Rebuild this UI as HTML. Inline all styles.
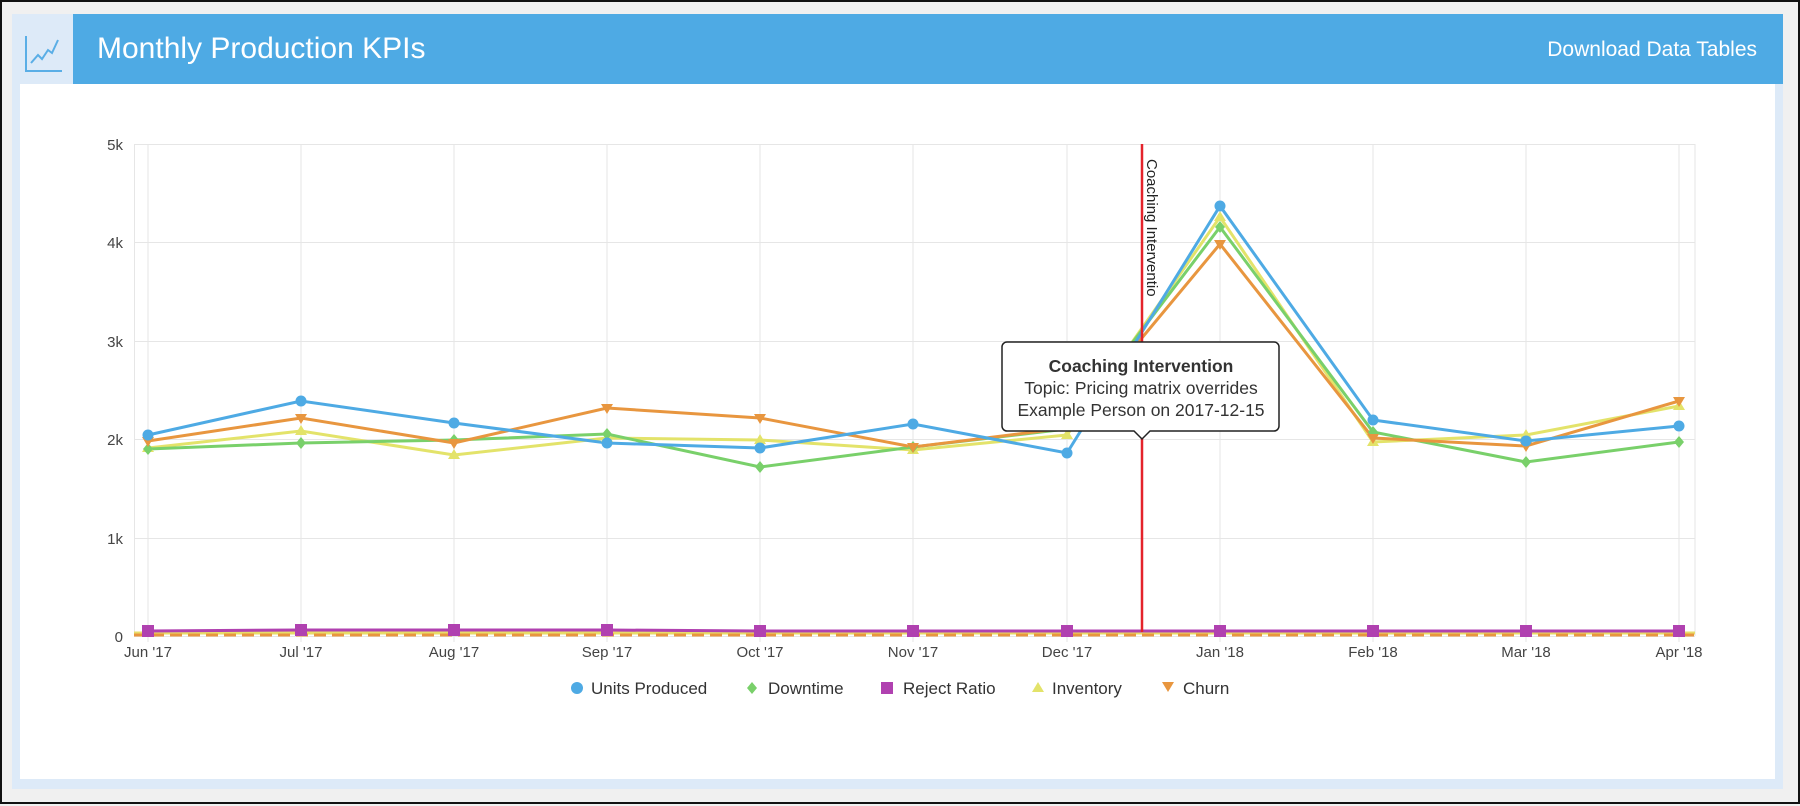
<!DOCTYPE html>
<html><head><meta charset="utf-8"><style>
html,body{margin:0;padding:0}
body{width:1800px;height:804px;background:#f0f0f0;position:relative;overflow:hidden;font-family:"Liberation Sans",sans-serif;box-sizing:border-box;border:2px solid #111}
.iconbox{position:absolute;left:10px;top:12px;width:62px;height:70px;background:#ddeaf8}
.hdr{position:absolute;left:71px;top:12px;width:1710px;height:70px;background:#4eaae4;color:#fff}
.hdr .t{position:absolute;left:24px;top:18px;font-size:30px}
.hdr .d{position:absolute;right:26px;top:24px;font-size:21px}
.panel{position:absolute;left:10px;top:82px;width:1771px;height:705px;background:#ddeaf8}
.inner{position:absolute;left:8px;top:0;width:1755px;height:695px;background:#fff}
</style></head><body>
<div class="iconbox"><svg width="62" height="70"><path d="M14 22 V57 H50" stroke="#5aaee6" stroke-width="2" fill="none"/><path d="M19 49 L26 41 L30 45 L36 36 L40 39 L46 26" stroke="#5aaee6" stroke-width="2" fill="none"/></svg></div>
<div class="hdr"><span class="t">Monthly Production KPIs</span><span class="d">Download Data Tables</span></div>
<div class="panel"><div class="inner"></div></div>
<svg style="position:absolute;left:0;top:0" width="1800" height="804" font-family="Liberation Sans, sans-serif">
<g stroke="#e6e6e6" stroke-width="1">
<line x1="132" y1="142.5" x2="1693" y2="142.5"/><line x1="132" y1="240.5" x2="1693" y2="240.5"/><line x1="132" y1="339.5" x2="1693" y2="339.5"/><line x1="132" y1="437.5" x2="1693" y2="437.5"/><line x1="132" y1="536.5" x2="1693" y2="536.5"/><line x1="132" y1="634.5" x2="1693" y2="634.5"/>
<line x1="132.5" y1="142" x2="132.5" y2="634"/><line x1="146" y1="142" x2="146" y2="640"/><line x1="299" y1="142" x2="299" y2="640"/><line x1="452" y1="142" x2="452" y2="640"/><line x1="605" y1="142" x2="605" y2="640"/><line x1="758" y1="142" x2="758" y2="640"/><line x1="911" y1="142" x2="911" y2="640"/><line x1="1065" y1="142" x2="1065" y2="640"/><line x1="1218" y1="142" x2="1218" y2="640"/><line x1="1371" y1="142" x2="1371" y2="640"/><line x1="1524" y1="142" x2="1524" y2="640"/><line x1="1677" y1="142" x2="1677" y2="640"/><line x1="1693" y1="142" x2="1693" y2="634"/>
</g>
<g font-size="15" fill="#444" text-anchor="end"><text x="121" y="148">5k</text><text x="121" y="246">4k</text><text x="121" y="345">3k</text><text x="121" y="443">2k</text><text x="121" y="542">1k</text><text x="121" y="640">0</text></g>
<g font-size="15" fill="#444" text-anchor="middle"><text x="146" y="655">Jun '17</text><text x="299" y="655">Jul '17</text><text x="452" y="655">Aug '17</text><text x="605" y="655">Sep '17</text><text x="758" y="655">Oct '17</text><text x="911" y="655">Nov '17</text><text x="1065" y="655">Dec '17</text><text x="1218" y="655">Jan '18</text><text x="1371" y="655">Feb '18</text><text x="1524" y="655">Mar '18</text><text x="1677" y="655">Apr '18</text></g>
<line x1="132" y1="631" x2="1693" y2="631" stroke="#e8dd6a" stroke-width="3"/>
<line x1="132" y1="633" x2="1693" y2="633" stroke="#e8963f" stroke-width="3" stroke-dasharray="12 6"/>
<g fill="none" stroke-width="3">
<polyline stroke="#e3e36a" points="146,446 299,429 452,453 605,436 758,438 911,448 1065,433 1218,215 1371,440 1524,433 1677,404"/>
<polyline stroke="#79d06a" points="146,447 299,441 452,438 605,432 758,465 911,445 1065,427 1218,225 1371,430 1524,460 1677,440"/>
<polyline stroke="#e8963f" points="146,439 299,416 452,441 605,406 758,416 911,445 1065,426 1218,242 1371,436 1524,444 1677,399"/>
<polyline stroke="#4eaae4" points="146,433 299,399 452,421 605,441 758,446 911,422 1065,451 1218,204 1371,418 1524,439 1677,424"/>
<polyline stroke="#b041b0" points="146,629 299,628 452,628 605,628 758,629 911,629 1065,629 1218,629 1371,629 1524,629 1677,629"/>
</g>
<g fill="#e3e36a"><path d="M146,440l6,10h-12z M299,423l6,10h-12z M452,447l6,10h-12z M605,430l6,10h-12z M758,432l6,10h-12z M911,442l6,10h-12z M1065,427l6,10h-12z M1218,209l6,10h-12z M1371,434l6,10h-12z M1524,427l6,10h-12z M1677,398l6,10h-12z"/></g>
<g fill="#79d06a"><path d="M146,441l5,6l-5,6l-5,-6z M299,435l5,6l-5,6l-5,-6z M452,432l5,6l-5,6l-5,-6z M605,426l5,6l-5,6l-5,-6z M758,459l5,6l-5,6l-5,-6z M911,439l5,6l-5,6l-5,-6z M1218,219l5,6l-5,6l-5,-6z M1371,424l5,6l-5,6l-5,-6z M1524,454l5,6l-5,6l-5,-6z M1677,434l5,6l-5,6l-5,-6z"/></g>
<g fill="#e8963f"><path d="M146,445l6,-10h-12z M299,422l6,-10h-12z M452,447l6,-10h-12z M605,412l6,-10h-12z M758,422l6,-10h-12z M911,451l6,-10h-12z M1218,248l6,-10h-12z M1371,442l6,-10h-12z M1524,450l6,-10h-12z M1677,405l6,-10h-12z"/></g>
<g fill="#4eaae4"><circle cx="146" cy="433" r="5.5"/><circle cx="299" cy="399" r="5.5"/><circle cx="452" cy="421" r="5.5"/><circle cx="605" cy="441" r="5.5"/><circle cx="758" cy="446" r="5.5"/><circle cx="911" cy="422" r="5.5"/><circle cx="1065" cy="451" r="5.5"/><circle cx="1218" cy="204" r="5.5"/><circle cx="1371" cy="418" r="5.5"/><circle cx="1524" cy="439" r="5.5"/><circle cx="1677" cy="424" r="5.5"/></g>
<g fill="#b041b0"><rect x="140" y="623" width="12" height="12"/><rect x="293" y="622" width="12" height="12"/><rect x="446" y="622" width="12" height="12"/><rect x="599" y="622" width="12" height="12"/><rect x="752" y="623" width="12" height="12"/><rect x="905" y="623" width="12" height="12"/><rect x="1059" y="623" width="12" height="12"/><rect x="1212" y="623" width="12" height="12"/><rect x="1365" y="623" width="12" height="12"/><rect x="1518" y="623" width="12" height="12"/><rect x="1671" y="623" width="12" height="12"/></g>
<line x1="1140" y1="142" x2="1140" y2="630" stroke="#e4232b" stroke-width="2.5"/>
<text transform="translate(1145,157) rotate(90)" font-size="15" fill="#222">Coaching Interventio</text>
<path d="M1005,340 H1272 a5,5 0 0 1 5,5 V424 a5,5 0 0 1 -5,5 H1148 L1140,437 L1132,429 H1005 a5,5 0 0 1 -5,-5 V345 a5,5 0 0 1 5,-5z" fill="#fff" stroke="#222" stroke-width="1.5"/>
<g font-size="17.5" fill="#333" text-anchor="middle"><text x="1139" y="370" font-weight="bold">Coaching Intervention</text><text x="1139" y="392">Topic: Pricing matrix overrides</text><text x="1139" y="414">Example Person on 2017-12-15</text></g>
<g font-size="17" fill="#333">
<circle cx="575" cy="686" r="6" fill="#4eaae4"/><text x="589" y="692">Units Produced</text>
<path d="M750,680l5,6l-5,6l-5,-6z" fill="#79d06a"/><text x="766" y="692">Downtime</text>
<rect x="879" y="680" width="12" height="12" fill="#b041b0"/><text x="901" y="692">Reject Ratio</text>
<path d="M1036,680l6,10h-12z" fill="#e3e36a"/><text x="1050" y="692">Inventory</text>
<path d="M1166,690l6,-10h-12z" fill="#e8963f"/><text x="1181" y="692">Churn</text>
</g>
</svg>
</body></html>
